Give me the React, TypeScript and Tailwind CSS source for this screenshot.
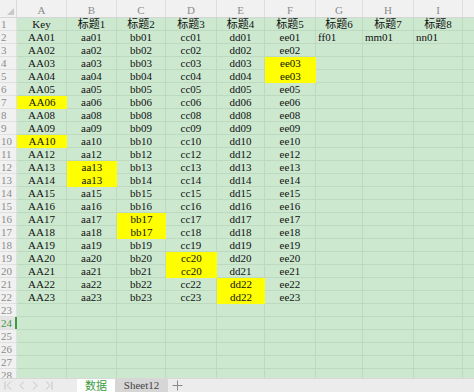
import React from "react";

const COLS = ["A", "B", "C", "D", "E", "F", "G", "H", "I"];
const WCLS = ["w-[50px]", "w-[50px]", "w-[49px]", "w-[51px]", "w-[48px]", "w-[51px]", "w-[47px]", "w-[51px]", "w-[49px]"];

type Cell = { v: string; y?: boolean; left?: boolean };

const first: Cell[] = ["Key", "标题1", "标题2", "标题3", "标题4", "标题5", "标题6", "标题7", "标题8"].map((v) => ({ v }));

const n = (i: number) => (i < 10 ? "0" + i : "" + i);

const aIdx = [1, 2, 3, 4, 5, 6, 8, 9, 10, 12, 13, 14, 15, 16, 17, 18, 19, 20, 21, 22, 23];
const rowsData: Cell[][] = aIdx.map((k) => [
  { v: "AA" + n(k) },
  { v: "aa" + n(k) },
  { v: "bb" + n(k) },
  { v: "cc" + n(k) },
  { v: "dd" + n(k) },
  { v: "ee" + n(k) },
]);
rowsData[0].push({ v: "ff01", left: true }, { v: "mm01", left: true }, { v: "nn01", left: true });
rowsData[2][5] = { v: "ee03", y: true };
rowsData[3][5] = { v: "ee03", y: true };
rowsData[5][0] = { v: "AA06", y: true };
rowsData[8][0] = { v: "AA10", y: true };
rowsData[10][1] = { v: "aa13", y: true };
rowsData[11][1] = { v: "aa13", y: true };
rowsData[14][2] = { v: "bb17", y: true };
rowsData[15][2] = { v: "bb17", y: true };
rowsData[17][3] = { v: "cc20", y: true };
rowsData[18][3] = { v: "cc20", y: true };
rowsData[19][4] = { v: "dd22", y: true };
rowsData[20][4] = { v: "dd22", y: true };

const allRows: Cell[][] = [first, ...rowsData];
while (allRows.length < 28) allRows.push([]);

const font = { fontFamily: '"Liberation Serif", "Noto Sans CJK SC", serif' };

export default function App() {
  return (
    <div className="w-[474px] h-[392px] overflow-hidden flex flex-col bg-[#cce8cf] text-[11px] text-[#111]" style={font}>
      <div className="flex-1 overflow-hidden flex flex-col">
        <div className="flex h-[18px] shrink-0 bg-[#f1f1f1] border-b border-[#d6d6d6]">
          <div className="w-[17px] shrink-0 border-r border-[#dadada] relative">
            <svg className="absolute right-[2px] bottom-[2px]" width="7" height="7" viewBox="0 0 7 7">
              <polygon points="7,0 7,7 0,7" fill="#c8c8c8" />
            </svg>
          </div>
          {COLS.map((c, i) => (
            <div key={c} className={`${WCLS[i]} shrink-0 border-r border-[#dedede] flex items-center justify-center pt-[3px] text-[#8c8c8c] text-[11px]`}>
              {c}
            </div>
          ))}
          <div className="flex-1" />
        </div>
        {allRows.map((row, r) => {
          const active = r + 1 === 24;
          return (
            <div key={r} className="flex h-[13px] shrink-0">
              <div
                className={`w-[17px] shrink-0 border-r border-b border-[#e0e0e0] flex items-center pl-[1px] text-[11px] leading-none relative ${
                  active ? "bg-[#e4e4e4] text-[#3d9a3d]" : "bg-[#f1f1f1] text-[#8c8c8c]"
                }`}
              >
                {r + 1}
                {active && <div className="absolute right-[-1px] top-0 bottom-0 w-[2px] bg-[#3d9a3d]" />}
              </div>
              {COLS.map((c, i) => {
                const cell = row[i];
                const yellow = cell?.y;
                return (
                  <div
                    key={c}
                    className={`${WCLS[i]} shrink-0 flex items-center leading-none whitespace-nowrap ${
                      cell?.left ? "justify-start pl-[2px]" : "justify-center"
                    } ${yellow ? "bg-[#ffff00]" : "border-r border-b border-[#bddac1]"}`}
                  >
                    {cell?.v ?? ""}
                  </div>
                );
              })}
              <div className="flex-1 border-b border-[#bddac1]" />
            </div>
          );
        })}
      </div>
      <div className="h-[14px] shrink-0 flex items-stretch bg-[#ececec] border-t border-[#d8d8d8] text-[11px]">
        <div className="w-[77px] shrink-0 flex items-center gap-[7px] pl-[4px]">
          <svg width="8" height="9" viewBox="0 0 8 9"><path d="M1 0.5v8M7 0.5L3 4.5l4 4" stroke="#c4c4c4" strokeWidth="1" fill="none" /></svg>
          <svg width="6" height="9" viewBox="0 0 6 9"><path d="M5 0.5L1 4.5l4 4" stroke="#c4c4c4" strokeWidth="1" fill="none" /></svg>
          <svg width="6" height="9" viewBox="0 0 6 9"><path d="M1 0.5l4 4-4 4" stroke="#c4c4c4" strokeWidth="1" fill="none" /></svg>
          <svg width="8" height="9" viewBox="0 0 8 9"><path d="M1 0.5l4 4-4 4M7 0.5v8" stroke="#c4c4c4" strokeWidth="1" fill="none" /></svg>
        </div>
        <div className="w-[38px] shrink-0 bg-white flex items-center justify-center text-[#3d9a3d] text-[11px] leading-none" style={{ fontFamily: '"Noto Sans CJK SC", sans-serif' }}>
          数据
        </div>
        <div className="w-[53px] shrink-0 bg-[#d6d6d6] flex items-center justify-center text-[#444] leading-none">
          Sheet12
        </div>
        <div className="w-[18px] flex items-center justify-center">
          <svg width="11" height="11" viewBox="0 0 11 11"><path d="M5.5 0.5v10M0.5 5.5h10" stroke="#8a8a8a" strokeWidth="1" /></svg>
        </div>
      </div>
    </div>
  );
}
